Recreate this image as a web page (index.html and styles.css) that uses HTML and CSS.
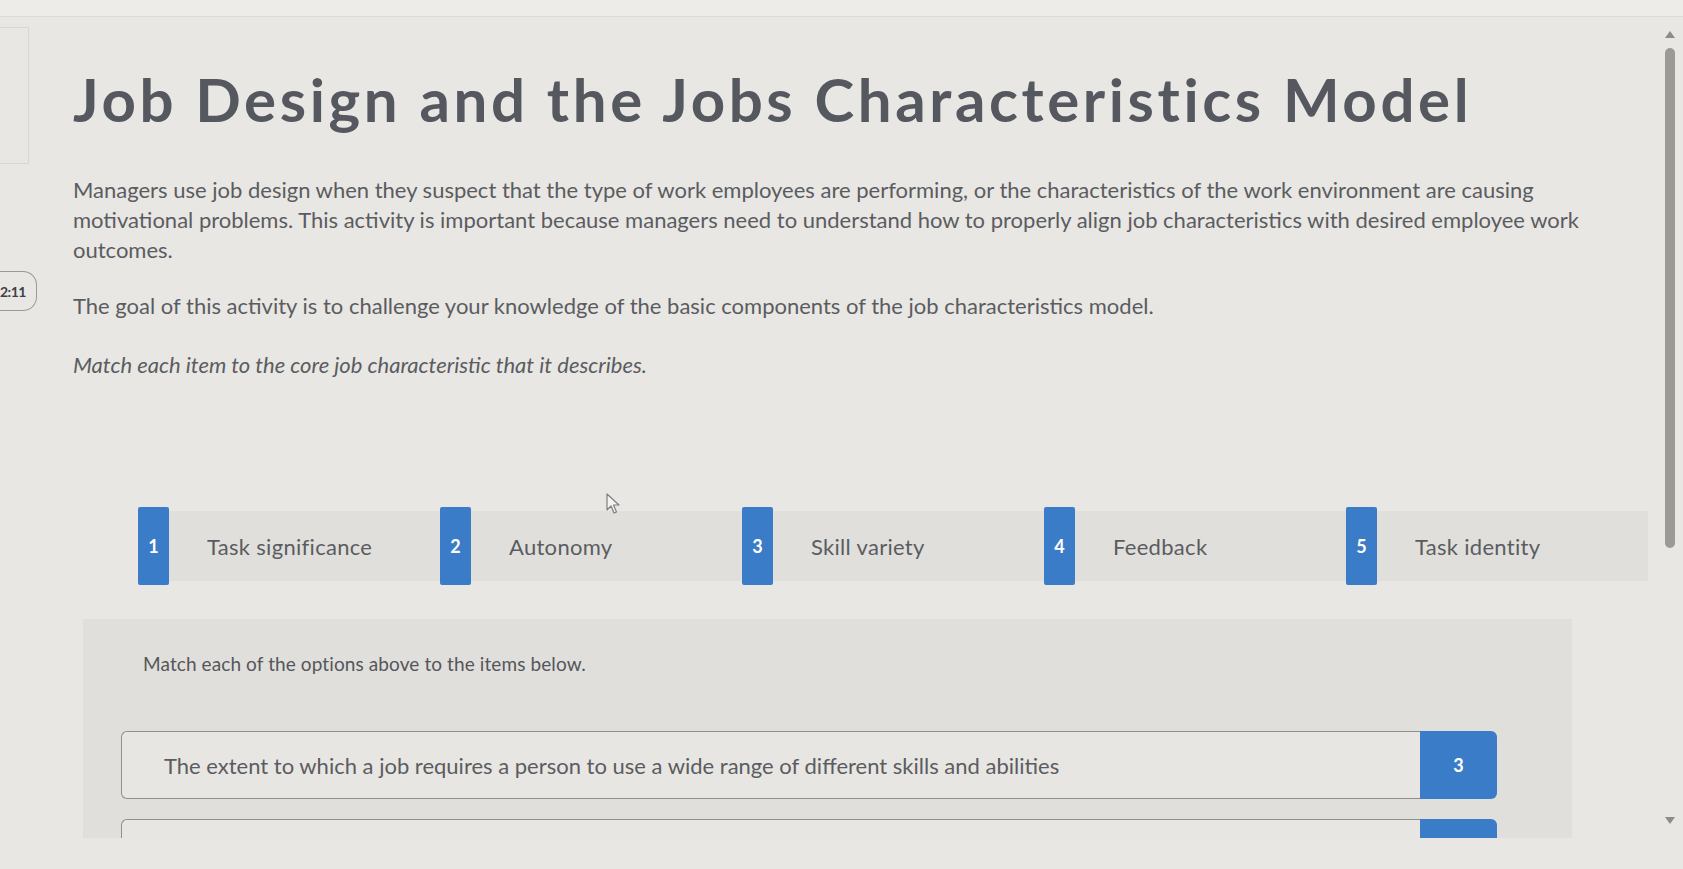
FILE: index.html
```html
<!DOCTYPE html>
<html lang="en">
<head>
    <meta charset="UTF-8">
    <meta name="viewport" content="width=device-width, initial-scale=1.0">
    <title>Job Design and the Jobs Characteristics Model</title>
    <link rel="stylesheet" href="styles.css">
</head>
<body>
    <div class="topbar"></div>
    <div class="frame">
        <aside class="rail">
            <div class="rail-box"></div>
            <div class="timer">2:11</div>
        </aside>

        <main class="content">
            <h1 class="title">Job Design and the Jobs Characteristics Model</h1>
            <p class="intro">Managers use job design when they suspect that the type of work employees are performing, or the characteristics of the work environment are causing motivational problems. This activity is important because managers need to understand how to properly align job characteristics with desired employee work outcomes.</p>
            <p class="goal">The goal of this activity is to challenge your knowledge of the basic components of the job characteristics model.</p>
            <p class="instruction">Match each item to the core job characteristic that it describes.</p>

            <div class="choices">
                <div class="choice"><span class="tag">1</span><span class="label">Task significance</span></div>
                <div class="choice"><span class="tag">2</span><span class="label">Autonomy</span></div>
                <div class="choice"><span class="tag">3</span><span class="label">Skill variety</span></div>
                <div class="choice"><span class="tag">4</span><span class="label">Feedback</span></div>
                <div class="choice"><span class="tag">5</span><span class="label">Task identity</span></div>
                <svg class="cursor" width="14" height="22" viewBox="0 0 14 22">
                    <path d="M1 1 L1 17 L5 13 L8 20 L10.5 19 L7.5 12 L13 12 Z" fill="#f4f3ef" stroke="#7d7e82" stroke-width="1.2" stroke-linejoin="round"/>
                </svg>
            </div>

            <section class="panel">
                <p class="panel-hint">Match each of the options above to the items below.</p>
                <div class="answer">
                    <div class="answer-text">The extent to which a job requires a person to use a wide range of different skills and abilities</div>
                    <div class="answer-tag">3</div>
                </div>
                <div class="answer">
                    <div class="answer-text"></div>
                    <div class="answer-tag"></div>
                </div>
            </section>
        </main>

        <div class="scrollbar">
            <span class="arrow-up"></span>
            <span class="thumb"></span>
            <span class="arrow-down"></span>
        </div>
    </div>
</body>
</html>
```

FILE: styles.css
```css
body {
    margin: 0;
    background-color: #e8e7e3;
    font-family: Lato, "Open Sans", sans-serif;
    color: #5b5c61;
    overflow: hidden;
}
.topbar {
    height: 16px;
    background-color: #edece8;
    border-bottom: 1px solid #dcdbd7;
}
.frame {
    display: flex;
    height: 821px;
}
.rail {
    width: 40px;
    flex-shrink: 0;
}
.rail-box {
    margin-top: 10px;
    width: 28px;
    height: 135px;
    border: 1px solid #d8d7d3;
    border-left: none;
}
.timer {
    margin-top: 107px;
    width: 36px;
    height: 38px;
    border: 1px solid #9a9a9a;
    border-left: none;
    border-radius: 0 14px 14px 0;
    font-size: 14px;
    font-weight: 700;
    color: #3f4045;
    display: flex;
    align-items: center;
    letter-spacing: -0.5px;
}
.content {
    flex: 1;
    overflow: hidden;
    padding-left: 33px;
}
.title {
    margin: 46px 0 0;
    font-size: 60px;
    line-height: 72px;
    font-weight: 700;
    letter-spacing: 3.6px;
    color: #55585f;
}
.intro, .goal, .instruction {
    margin: 0;
    font-size: 22px;
    line-height: 30px;
    width: 1530px;
}
.intro {
    margin-top: 40px;
}
.goal {
    margin-top: 26px;
}
.instruction {
    margin-top: 29px;
    font-style: italic;
}
.choices {
    position: relative;
    display: flex;
    margin: 127px 0 0 65px;
    width: 1510px;
}
.choice {
    flex: 1;
    display: flex;
    align-items: center;
}
.tag {
    width: 31px;
    height: 78px;
    flex-shrink: 0;
    background-color: #3b7cc9;
    color: #ffffff;
    font-weight: 700;
    font-size: 18px;
    border-radius: 2px;
    display: flex;
    align-items: center;
    justify-content: center;
}
.label {
    flex: 1;
    height: 70px;
    background-color: #e0dfdb;
    padding-left: 38px;
    font-size: 22px;
    letter-spacing: 0.3px;
    display: flex;
    align-items: center;
}
.cursor {
    position: absolute;
    left: 468px;
    top: -14px;
}
.panel {
    margin: 34px 0 0 10px;
    width: 1489px;
    padding: 32px 0 0 38px;
    box-sizing: border-box;
    height: 240px;
    background-color: #e0dfdb;
}
.panel-hint {
    margin: 0 0 54px 22px;
    font-size: 19px;
    line-height: 26px;
    letter-spacing: 0.1px;
    color: #55565b;
}
.answer {
    display: flex;
    width: 1376px;
    height: 68px;
    margin-bottom: 20px;
}
.answer-text {
    flex: 1;
    border: 1px solid #8f8f8f;
    border-right: none;
    border-radius: 6px 0 0 6px;
    background-color: #e7e6e2;
    padding-left: 42px;
    font-size: 22px;
    display: flex;
    align-items: center;
}
.answer-tag {
    width: 77px;
    background-color: #3b7cc9;
    color: #ffffff;
    font-weight: 700;
    font-size: 18px;
    border-radius: 0 6px 6px 0;
    display: flex;
    align-items: center;
    justify-content: center;
}
.scrollbar {
    width: 34px;
    flex-shrink: 0;
    padding-left: 8px;
    box-sizing: border-box;
    display: flex;
    flex-direction: column;
    align-items: center;
}
.arrow-up {
    margin-top: 14px;
    border-left: 5px solid transparent;
    border-right: 5px solid transparent;
    border-bottom: 7px solid #8c8c8c;
}
.thumb {
    margin-top: 10px;
    width: 10px;
    height: 500px;
    border-radius: 5px;
    background-color: #9b9a96;
}
.arrow-down {
    margin-top: auto;
    margin-bottom: 14px;
    border-left: 5px solid transparent;
    border-right: 5px solid transparent;
    border-top: 7px solid #8c8c8c;
}
```
